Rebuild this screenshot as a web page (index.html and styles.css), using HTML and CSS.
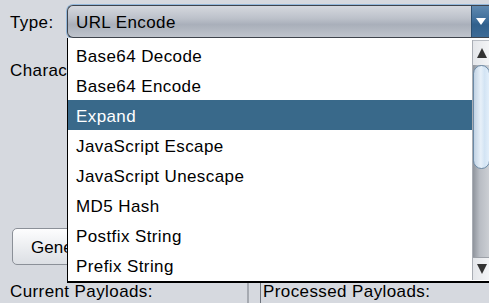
FILE: index.html
```html
<!DOCTYPE html>
<html lang="en">
<head>
  <meta charset="UTF-8">
  <title>Payload Processing</title>
  <link rel="stylesheet" href="styles.css">
</head>
<body>
  <div class="panel">
    <div class="type-row">
      <div class="label">Type:</div>
      <div class="combo">
        <div class="combo-text">URL Encode</div>
        <div class="combo-arrow">
          <svg width="10" height="7" viewBox="0 0 10 7"><path d="M0 0 H10 L5 7 Z" fill="#fff"/></svg>
        </div>
      </div>
    </div>

    <div class="charset-row">Character set:</div>

    <div class="button-row">
      <button class="btn">Generate</button>
    </div>

    <div class="payloads">
      <div class="payloads-left">Current Payloads:</div>
      <div class="divider"></div>
      <div class="payloads-right">Processed Payloads:</div>
    </div>

    <!-- open combo popup -->
    <div class="popup">
      <ul class="options">
        <li>Base64 Decode</li>
        <li>Base64 Encode</li>
        <li class="selected">Expand</li>
        <li>JavaScript Escape</li>
        <li>JavaScript Unescape</li>
        <li>MD5 Hash</li>
        <li>Postfix String</li>
        <li>Prefix String</li>
      </ul>
      <div class="scrollbar">
        <div class="sb-btn sb-up">
          <svg width="10" height="10" viewBox="0 0 10 10"><path d="M5 0 L10 10 H0 Z" fill="#333"/></svg>
        </div>
        <div class="sb-track">
          <div class="sb-thumb"></div>
        </div>
        <div class="sb-btn sb-down">
          <svg width="10" height="10" viewBox="0 0 10 10"><path d="M0 0 H10 L5 10 Z" fill="#333"/></svg>
        </div>
      </div>
    </div>
  </div>
</body>
</html>
```

FILE: styles.css
```css
html, body {
  margin: 0;
  width: 489px;
  height: 303px;
  overflow: hidden;
  background: #d6d9df;
  color: #000;
  font-family: 'Liberation Sans', Arial, sans-serif;
  font-size: 17px;
  letter-spacing: 0.4px;
}

.panel {
  position: relative;
  display: flex;
  flex-direction: column;
  height: 303px;
}

.type-row {
  display: flex;
  align-items: stretch;
  height: 33px;
  margin-top: 5px;
  padding-left: 10px;
}

.label {
  width: 57px;
  padding-top: 3px;
  display: flex;
  align-items: center;
}

.combo {
  flex: 1;
  display: flex;
  box-sizing: border-box;
  margin-right: -1px;
  border: 1px solid #3f444c;
  border-right: none;
  border-radius: 6px 0 0 6px;
  background: linear-gradient(#d5d8de, #bcc1ca 40%, #a9afba 60%, #bfc4cc);
  box-shadow: 0 0 0 1px #94b8db;
}

.combo-text {
  flex: 1;
  display: flex;
  align-items: center;
  padding: 3px 0 0 8px;
}

.combo-arrow {
  width: 18px;
  display: flex;
  align-items: center;
  justify-content: center;
  background: linear-gradient(#5f89b0, #3f6e9a 45%, #31608c 60%, #3d6b96);
  border-left: 1px solid #2c4f70;
}

.charset-row {
  margin-top: 23px;
  height: 20px;
  line-height: 20px;
  padding-left: 10px;
}

.button-row {
  margin-top: 147px;
  padding-left: 12px;
  height: 37px;
}

.btn {
  height: 37px;
  padding: 2px 20px 0 18px;
  border: 1px solid #8b9098;
  border-radius: 5px;
  background: linear-gradient(#fdfdfe, #eceef1 50%, #dcdfe4);
  font: inherit;
  color: #000;
}

.payloads {
  margin-top: 15px;
  height: 23px;
  display: flex;
  line-height: 23px;
}

.payloads-left {
  width: 237px;
  padding-left: 10px;
}

.divider {
  width: 2px;
  margin-top: 3px;
  background: #a6aab1;
  border-right: 10px solid #d6d9df;
  box-shadow: 11px 0 0 -10px #737983;
}

.payloads-right {
  flex: 1;
  padding-left: 2px;
  margin-left: 1px;
  border-left: 1px solid #6d737c;
}

.popup {
  position: absolute;
  left: 67px;
  top: 38px;
  right: -1px;
  height: 245px;
  box-sizing: border-box;
  padding: 2px 0 1px;
  background: #fff;
  border-left: 1px solid #000;
  border-bottom: 2px solid #000;
  display: flex;
}

.options {
  flex: 1;
  margin: 0;
  padding: 0;
  list-style: none;
}

.options li {
  height: 30px;
  box-sizing: border-box;
  padding: 3px 0 0 8px;
  line-height: 27px;
  white-space: nowrap;
}

.options li.selected {
  background: #39698a;
  color: #fff;
}

.scrollbar {
  width: 17px;
  display: flex;
  flex-direction: column;
  border-left: 1px solid #a9adb4;
}

.sb-btn {
  display: flex;
  align-items: center;
  justify-content: center;
  background: linear-gradient(90deg, #e4e6ea, #f4f5f7);
}

.sb-up {
  height: 24px;
  border-top: 1px solid #b9bdc4;
}

.sb-down {
  height: 22px;
  border-top: 1px solid #9da1a8;
}

.sb-track {
  flex: 1;
  background: linear-gradient(90deg, #8f949c, #b9bdc4 40%, #cdd0d5);
}

.sb-thumb {
  height: 104px;
  box-sizing: border-box;
  border: 1px solid #6c8aa6;
  border-radius: 9px;
  background: linear-gradient(90deg, #c2d3e4, #e7f0f9 45%, #d3e4f4 70%, #e2eefa);
}
```
